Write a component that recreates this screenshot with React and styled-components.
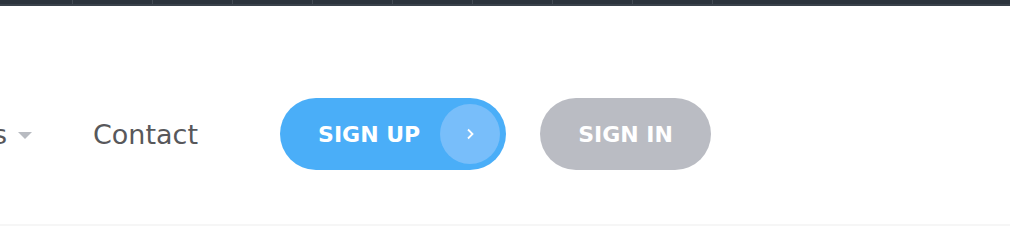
import styled, { createGlobalStyle } from "styled-components";

const GlobalStyle = createGlobalStyle`
  *, *::before, *::after {
    box-sizing: border-box;
  }
  body {
    margin: 0;
    background: #fff;
    font-family: "DejaVu Sans", Verdana, sans-serif;
  }
`;

const Header = styled.header`
  width: 1010px;
  height: 226px;
  display: flex;
  flex-direction: column;
  overflow: hidden;
`;

const TopBar = styled.div`
  display: flex;
  height: 6px;
  background: #2b333c;
  border-bottom: 2px solid #39414a;
`;

const TopCell = styled.div`
  flex: 0 0 ${(p) => p.$w}px;
  border-right: 1px solid #414952;
  &:last-child {
    flex: 1;
    border-right: none;
  }
`;

const Main = styled.div`
  flex: 1;
  display: flex;
  align-items: flex-start;
  padding-top: 92px;
  border-bottom: 2px solid #f6f6f6;
`;

const Nav = styled.nav`
  display: flex;
  align-items: center;
  height: 72px;
`;

const Clip = styled.div`
  width: 33px;
  overflow: hidden;
  display: flex;
  justify-content: flex-end;
  flex-shrink: 0;
`;

const NavLink = styled.a`
  display: flex;
  align-items: center;
  gap: 11px;
  font-size: 27px;
  color: #58585b;
  white-space: nowrap;
  text-decoration: none;
  margin-left: ${(p) => p.$ml || 0}px;
`;

const Caret = styled.span`
  width: 0;
  height: 0;
  border-left: 7.5px solid transparent;
  border-right: 7.5px solid transparent;
  border-top: 7px solid #b8bbc1;
  margin-top: 3px;
  margin-right: 1px;
`;

const Pill = styled.button`
  display: flex;
  align-items: center;
  height: 72px;
  border: none;
  border-radius: 36px;
  background: ${(p) => (p.$primary ? "#4aaef8" : "#babcc3")};
  color: #fff;
  font-family: "DejaVu Sans", Verdana, sans-serif;
  font-weight: bold;
  font-size: 22px;
  padding: ${(p) => (p.$primary ? "0 6px 0 38px" : "0 38px")};
  margin-left: ${(p) => p.$ml}px;
  cursor: pointer;
`;

const Circle = styled.span`
  width: 60px;
  height: 60px;
  border-radius: 50%;
  background: #78befa;
  display: flex;
  align-items: center;
  justify-content: center;
  margin-left: 20px;
`;

export default function App() {
  return (
    <>
      <GlobalStyle />
      <Header>
        <TopBar>
          <TopCell $w={73} />
          {[...Array(8)].map((_, i) => (
            <TopCell key={i} $w={80} />
          ))}
          <TopCell />
        </TopBar>
        <Main>
          <Nav>
            <Clip>
              <NavLink href="#">
                Services
                <Caret />
              </NavLink>
            </Clip>
            <NavLink href="#" $ml={60}>
              Contact
            </NavLink>
            <Pill $primary $ml={82}>
              SIGN UP
              <Circle>
                <svg width="10" height="14" viewBox="0 0 10 14">
                  <path
                    d="M3 2.5 L7.5 7 L3 11.5"
                    fill="none"
                    stroke="#fff"
                    strokeWidth="1.8"
                  />
                </svg>
              </Circle>
            </Pill>
            <Pill $ml={34}>SIGN IN</Pill>
          </Nav>
        </Main>
      </Header>
    </>
  );
}
